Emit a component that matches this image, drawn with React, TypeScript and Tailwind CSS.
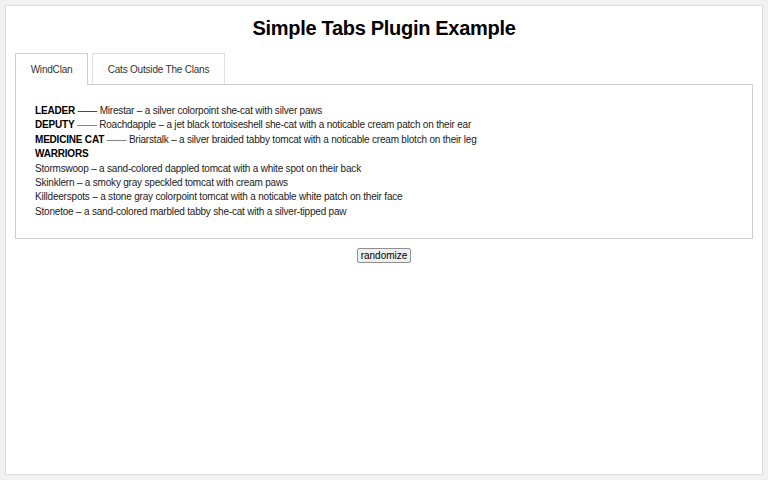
const members = [
  { rank: 'LEADER', sep: '——', text: 'Mirestar – a silver colorpoint she-cat with silver paws' },
  { rank: 'DEPUTY', sep: '——', text: 'Roachdapple – a jet black tortoiseshell she-cat with a noticable cream patch on their ear' },
  { rank: 'MEDICINE CAT', sep: '——', text: 'Briarstalk – a silver braided tabby tomcat with a noticable cream blotch on their leg' },
]

const warriors = [
  'Stormswoop – a sand-colored dappled tomcat with a white spot on their back',
  'Skinklern – a smoky gray speckled tomcat with cream paws',
  'Killdeerspots – a stone gray colorpoint tomcat with a noticable white patch on their face',
  'Stonetoe – a sand-colored marbled tabby she-cat with a silver-tipped paw',
]

export default function App() {
  return (
    <div className="h-[480px] w-[768px] bg-[#f2f2f2] p-[5px] font-['Liberation_Sans',Arial,sans-serif] text-[#111]">
      <div className="flex h-[470px] flex-col border border-[#dcdcdc] bg-white px-[9px]">
        <h1 className="mt-[10px] text-center text-[20px] font-bold leading-[24px] tracking-[-0.3px] text-black">
          Simple Tabs Plugin Example
        </h1>

        {/* tab strip */}
        <div className="mt-[13px] flex gap-[4px] text-[10px] tracking-[-0.2px] text-[#333]">
          <div className="relative z-10 -mb-px flex h-[32px] w-[73px] items-center justify-center border border-b-0 border-[#d0d0d0] bg-white">
            WindClan
          </div>
          <div className="flex h-[31px] w-[133px] items-center justify-center border border-b-0 border-[#e0e0e0] bg-white">
            Cats Outside The Clans
          </div>
        </div>

        <div className="h-[155px] w-[738px] border border-[#d0d0d0] px-[19px] pt-[19px] text-[10px] leading-[14.4px] tracking-[-0.2px] text-[#222]">
          {members.map((m, i) => (
            <div key={m.rank}>
              <b className="text-black">{m.rank}</b>{' '}
              <span className={i === 0 ? 'text-[#222]' : 'text-[#666]'}>{m.sep}</span> {m.text}
            </div>
          ))}
          <div className="font-bold text-black">WARRIORS</div>
          {warriors.map((w) => (
            <div key={w}>{w}</div>
          ))}
        </div>

        <div className="mt-[9px] flex justify-center">
          <button className="h-[15px] rounded-[2px] border border-[#8f8f8f] bg-[#efefef] px-[3px] text-[10px] leading-[12px] text-black">
            randomize
          </button>
        </div>
      </div>
    </div>
  )
}
